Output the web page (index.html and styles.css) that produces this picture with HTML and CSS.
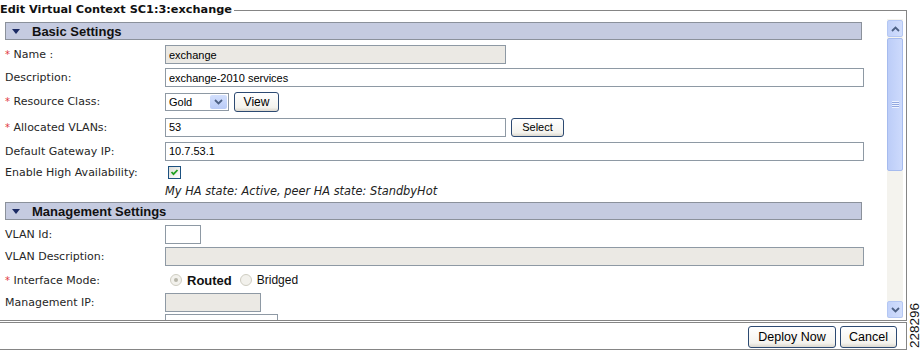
FILE: index.html
```html
<!DOCTYPE html>
<html lang="en">
<head>
    <meta charset="UTF-8">
    <title>Edit Virtual Context</title>
    <link rel="stylesheet" href="styles.css">
</head>
<body>
    <div class="page">
        <div class="frame">
            <fieldset class="box">
                <legend>Edit Virtual Context SC1:3:exchange</legend>
                <div class="viewport">
                    <div class="content">
                        <div class="section-head"><span class="tri"></span>Basic Settings</div>
                        <div class="form basic">
                            <div class="lbl"><span class="req">*</span> Name :</div>
                            <div class="field"><input class="txt w-mid" type="text" value="exchange" disabled></div>

                            <div class="lbl">Description:</div>
                            <div class="field"><input class="txt w-long" type="text" value="exchange-2010 services"></div>

                            <div class="lbl"><span class="req">*</span> Resource Class:</div>
                            <div class="field">
                                <div class="combo">
                                    <span>Gold</span>
                                    <span class="combo-btn">
                                        <svg width="9" height="6" viewBox="0 0 9 6"><path d="M1 1 L4.5 4.5 L8 1" fill="none" stroke="#4d6185" stroke-width="1.8"/></svg>
                                    </span>
                                </div>
                                <button class="btn btn-view">View</button>
                            </div>

                            <div class="lbl"><span class="req">*</span> Allocated VLANs:</div>
                            <div class="field">
                                <input class="txt w-mid" type="text" value="53">
                                <button class="btn btn-select">Select</button>
                            </div>

                            <div class="lbl">Default Gateway IP:</div>
                            <div class="field"><input class="txt w-long" type="text" value="10.7.53.1"></div>

                            <div class="lbl">Enable High Availability:</div>
                            <div class="field">
                                <span class="check">
                                    <svg width="11" height="11" viewBox="0 0 11 11"><path d="M2.5 5 L4.5 7.2 L8.5 3" fill="none" stroke="#21a121" stroke-width="1.8"/></svg>
                                </span>
                            </div>

                            <div class="ha-note">My HA state: Active, peer HA state: StandbyHot</div>
                        </div>

                        <div class="section-head mgmt-head"><span class="tri"></span>Management Settings</div>
                        <div class="form mgmt">
                            <div class="lbl">VLAN Id:</div>
                            <div class="field"><input class="txt w-tiny" type="text" value=""></div>

                            <div class="lbl">VLAN Description:</div>
                            <div class="field"><input class="txt w-long" type="text" value="" disabled></div>

                            <div class="lbl"><span class="req">*</span> Interface Mode:</div>
                            <div class="field radios">
                                <span class="radio on"></span><span class="radio-lbl strong">Routed</span>
                                <span class="radio"></span><span class="radio-lbl">Bridged</span>
                            </div>

                            <div class="lbl">Management IP:</div>
                            <div class="field"><input class="txt w-small" type="text" value="" disabled></div>

                            <div class="lbl"></div>
                            <div class="field"><input class="txt w-part" type="text" value=""></div>
                        </div>
                    </div>
                    <div class="scrollbar">
                        <div class="sb-btn">
                            <svg width="9" height="6" viewBox="0 0 9 6"><path d="M1 5 L4.5 1.5 L8 5" fill="none" stroke="#4d6185" stroke-width="1.8"/></svg>
                        </div>
                        <div class="sb-thumb"><span class="grip"></span></div>
                        <div class="sb-track"></div>
                        <div class="sb-btn">
                            <svg width="9" height="6" viewBox="0 0 9 6"><path d="M1 1 L4.5 4.5 L8 1" fill="none" stroke="#4d6185" stroke-width="1.8"/></svg>
                        </div>
                    </div>
                </div>
            </fieldset>
            <div class="footer">
                <button class="btn btn-deploy">Deploy Now</button>
                <button class="btn btn-cancel">Cancel</button>
            </div>
        </div>
        <div class="fig"><span>228296</span></div>
    </div>
</body>
</html>
```

FILE: styles.css
```css
body {
    margin: 0;
    padding-top: 3px;
    background: #fff;
    color: #222;
    font-family: "DejaVu Sans", Verdana, sans-serif;
    font-size: 11px;
    overflow: hidden;
}
.page {
    display: flex;
}
.frame {
    width: 907px;
}
.box {
    margin: 0;
    padding: 2px 3px 0 0;
    border: 1px solid #858585;
    border-left: none;
    min-width: 0;
}
.box legend {
    padding: 0 2px 0 0;
    font-weight: bold;
    font-size: 11.3px;
    line-height: 14px;
    color: #111;
}
.viewport {
    display: flex;
    height: 301px;
}
.content {
    flex: 1;
    overflow: hidden;
    padding: 3px 25px 0 5px;
}
.section-head {
    height: 18px;
    box-sizing: border-box;
    display: flex;
    align-items: center;
    padding-left: 6px;
    border: 1px solid #8b919b;
    background: #c5cbe0;
    color: #111;
    font: bold 13px "Liberation Sans", Arial, sans-serif;
}
.mgmt-head {
    margin-top: 4px;
}
.tri {
    width: 0;
    height: 0;
    border-left: 4px solid transparent;
    border-right: 4px solid transparent;
    border-top: 5px solid #1b2a63;
    margin-right: 12px;
}
.form {
    display: grid;
    grid-template-columns: 160px 1fr;
    align-items: center;
    margin-top: 3px;
}
.basic {
    grid-template-rows: 23px 23px 25px 26px 22px 21px 15px;
}
.mgmt {
    grid-template-rows: 22px 23px 24px 20px 23px;
}
.lbl {
    color: #262626;
    white-space: nowrap;
}
.req {
    color: #e0383e;
    font-size: 10px;
}
.field {
    display: flex;
    align-items: center;
    gap: 5px;
}
.txt {
    box-sizing: border-box;
    height: 19px;
    margin: 0;
    padding: 0 3px;
    border: 1px solid #8e99a4;
    background: #fff;
    color: #000;
    font: 11px "Liberation Sans", Arial, sans-serif;
    outline: none;
}
.txt:disabled {
    background: #ebe9e4;
    color: #000;
    -webkit-text-fill-color: #000;
}
.w-long { width: 699px; }
.w-mid { width: 341px; }
.w-tiny { width: 36px; }
.w-small { width: 96px; }
.w-part { width: 113px; }
.combo {
    box-sizing: border-box;
    width: 64px;
    height: 18px;
    display: flex;
    align-items: center;
    padding-left: 3px;
    border: 1px solid #8e99a4;
    color: #000;
    font: 11px "Liberation Sans", Arial, sans-serif;
}
.combo-btn {
    margin-left: auto;
    margin-right: 1px;
    width: 17px;
    height: 14px;
    display: flex;
    align-items: center;
    justify-content: center;
    border-radius: 2px;
    background: linear-gradient(#d3e0fd, #b9cbf6);
}
.btn {
    box-sizing: border-box;
    margin: 0;
    padding: 0;
    border: 1px solid #2d4a72;
    border-radius: 3px;
    background: linear-gradient(#ffffff, #f4f3ee 80%, #dcd8ce);
    color: #000;
    font: 12px "Liberation Sans", Arial, sans-serif;
}
.btn-view { width: 45px; height: 20px; }
.btn-select { width: 53px; height: 19px; font-size: 11px; }
.check {
    box-sizing: border-box;
    width: 13px;
    height: 13px;
    margin-left: 3px;
    display: flex;
    align-items: center;
    justify-content: center;
    border: 1px solid #1c5180;
    background: linear-gradient(135deg, #dcdcd7, #ffffff);
}
.ha-note {
    grid-column: 2;
    font-style: italic;
    font-size: 11.4px;
    color: #222;
    white-space: nowrap;
}
.radios {
    gap: 0;
    padding-left: 5px;
}
.radio {
    box-sizing: border-box;
    width: 12px;
    height: 12px;
    border-radius: 50%;
    border: 1px solid #cfcdc2;
    background: #f2f1ec;
    display: flex;
    align-items: center;
    justify-content: center;
}
.radio.on::after {
    content: "";
    width: 4px;
    height: 4px;
    border-radius: 50%;
    background: #b8b6aa;
}
.radio-lbl {
    margin: 0 8px 0 5px;
    color: #111;
    font: 12px "Liberation Sans", Arial, sans-serif;
}
.radio-lbl.strong {
    font-weight: bold;
    font-size: 13px;
}
.scrollbar {
    align-self: flex-start;
    width: 16px;
    height: 298px;
    padding-top: 1px;
    display: flex;
    flex-direction: column;
    background: #f4f3ee;
}
.sb-btn {
    box-sizing: border-box;
    height: 17px;
    display: flex;
    align-items: center;
    justify-content: center;
    border: 1px solid #b4c7f3;
    border-radius: 2px;
    background: linear-gradient(90deg, #c2d2fa, #d2defc);
}
.sb-thumb {
    box-sizing: border-box;
    height: 133px;
    margin-top: 1px;
    display: flex;
    align-items: center;
    justify-content: center;
    border: 1px solid #a6bbee;
    border-radius: 2px;
    background: linear-gradient(90deg, #bccdf8, #cddafc);
}
.grip {
    width: 7px;
    height: 7px;
    background: repeating-linear-gradient(#eef3ff 0 1px, #92a8e0 1px 2px);
}
.sb-track {
    flex: 1;
}
.footer {
    box-sizing: border-box;
    height: 28px;
    margin-top: 1px;
    display: flex;
    justify-content: flex-end;
    gap: 4px;
    padding: 3px 9px 0 0;
    border: 1px solid #858585;
    border-left: none;
}
.btn-deploy { width: 88px; height: 22px; font-size: 12.5px; }
.btn-cancel { width: 57px; height: 22px; font-size: 12.5px; }
.fig {
    width: 16px;
    display: flex;
    align-items: flex-end;
    justify-content: center;
}
.fig span {
    writing-mode: vertical-rl;
    transform: rotate(180deg);
    margin-bottom: 2px;
    color: #111;
    font: 13.5px/14px "Liberation Sans", Arial, sans-serif;
}
```
